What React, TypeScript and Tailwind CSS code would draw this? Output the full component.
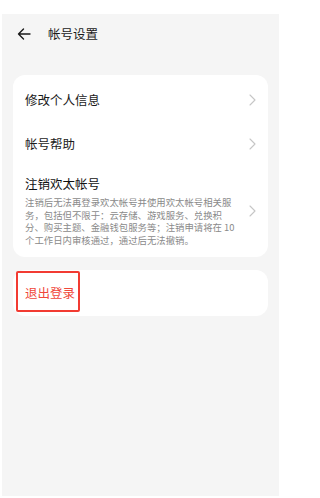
const FONT = { fontFamily: '"Noto Sans CJK SC", "Noto Sans", sans-serif' };

function Chevron() {
  return (
    <svg width="7" height="12" viewBox="0 0 7 12" fill="none" className="shrink-0">
      <path d="M1 1l5 5-5 5" stroke="#c6c6c6" strokeWidth="1.1" strokeLinecap="round" strokeLinejoin="round" />
    </svg>
  );
}

export default function App() {
  return (
    <div className="w-[281px] h-[498px] bg-white pt-[14px] px-[2px] pb-[2px]" style={FONT}>
      <div className="h-full bg-[#f5f5f5] px-[11px]">
        {/* Header */}
        <div className="h-[40px] flex items-center">
          <svg width="14" height="12" viewBox="0 0 14 12" fill="none" className="ml-[4px]">
            <path d="M13 6H1.5M6.5 1 1.5 6l5 5" stroke="#1a1a1a" strokeWidth="1.4" strokeLinecap="round" strokeLinejoin="round" />
          </svg>
          <span className="ml-[17px] text-[12.5px] text-[#1a1a1a] leading-none">帐号设置</span>
        </div>

        {/* Account card */}
        <div className="mt-[21px] bg-white rounded-[12px] pt-[3px] pl-[12px] pr-[12px] pb-[11px]">
          <div className="h-[44px] flex items-center justify-between">
            <span className="text-[12.5px] text-[#1a1a1a]">修改个人信息</span>
            <Chevron />
          </div>
          <div className="h-[44px] flex items-center justify-between">
            <span className="text-[12.5px] text-[#1a1a1a]">帐号帮助</span>
            <Chevron />
          </div>
          <div className="flex items-center justify-between pt-[10px]">
            <div className="w-[210px]">
              <div className="text-[12.5px] leading-[16px] text-[#111]">注销欢太帐号</div>
              <p className="mt-[4px] text-[9.4px] leading-[12.5px] text-[#8a8a8a]">
                注销后无法再登录欢太帐号并使用欢太帐号相关服务，包括但不限于：云存储、游戏服务、兑换积分、购买主题、金融钱包服务等；注销申请将在 10 个工作日内审核通过，通过后无法撤销。
              </p>
            </div>
            <Chevron />
          </div>
        </div>

        {/* Logout card */}
        <div className="relative mt-[13px] h-[46px] bg-white rounded-[12px] flex items-center pl-[12px]">
          <span className="text-[12.5px] text-[#f0473a]">退出登录</span>
          <div className="absolute left-[3px] top-[1px] w-[64px] h-[41px] border-2 border-[#f23b32] rounded-[2px]" />
        </div>
      </div>
    </div>
  );
}
